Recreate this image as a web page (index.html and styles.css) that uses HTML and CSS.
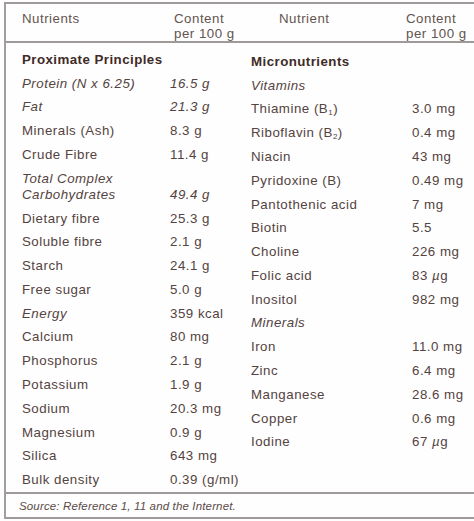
FILE: index.html
```html
<!DOCTYPE html>
<html>
<head>
<meta charset="utf-8">
<link rel="stylesheet" href="styles.css">
</head>
<body>
<div class="sheet">
  <div class="head">
    <div class="h h-name">Nutrients</div>
    <div class="h">Content<br>per 100 g</div>
    <div class="h">Nutrient</div>
    <div class="h">Content<br>per 100 g</div>
  </div>
  <div class="body">
    <div class="col col-left">
      <div class="row"><span class="group">Proximate Principles</span></div>
      <div class="row it"><span>Protein (N x 6.25)</span><span>16.5 g</span></div>
      <div class="row it"><span>Fat</span><span>21.3 g</span></div>
      <div class="row"><span>Minerals (Ash)</span><span>8.3 g</span></div>
      <div class="row"><span>Crude Fibre</span><span>11.4 g</span></div>
      <div class="row it"><span>Total Complex<br>Carbohydrates</span><span class="bottom">49.4 g</span></div>
      <div class="row"><span>Dietary fibre</span><span>25.3 g</span></div>
      <div class="row"><span>Soluble fibre</span><span>2.1 g</span></div>
      <div class="row"><span>Starch</span><span>24.1 g</span></div>
      <div class="row"><span>Free sugar</span><span>5.0 g</span></div>
      <div class="row"><span class="em">Energy</span><span>359 kcal</span></div>
      <div class="row"><span>Calcium</span><span>80 mg</span></div>
      <div class="row"><span>Phosphorus</span><span>2.1 g</span></div>
      <div class="row"><span>Potassium</span><span>1.9 g</span></div>
      <div class="row"><span>Sodium</span><span>20.3 mg</span></div>
      <div class="row"><span>Magnesium</span><span>0.9 g</span></div>
      <div class="row"><span>Silica</span><span>643 mg</span></div>
      <div class="row"><span>Bulk density</span><span>0.39 (g/ml)</span></div>
    </div>
    <div class="col col-right">
      <div class="row"><span class="group">Micronutrients</span></div>
      <div class="row"><span class="em">Vitamins</span></div>
      <div class="row"><span>Thiamine (B<sub>1</sub>)</span><span>3.0 mg</span></div>
      <div class="row"><span>Riboflavin (B<sub>2</sub>)</span><span>0.4 mg</span></div>
      <div class="row"><span>Niacin</span><span>43 mg</span></div>
      <div class="row"><span>Pyridoxine (B)</span><span>0.49 mg</span></div>
      <div class="row"><span>Pantothenic acid</span><span>7 mg</span></div>
      <div class="row"><span>Biotin</span><span>5.5</span></div>
      <div class="row"><span>Choline</span><span>226 mg</span></div>
      <div class="row"><span>Folic acid</span><span>83 <i>µ</i>g</span></div>
      <div class="row"><span>Inositol</span><span>982 mg</span></div>
      <div class="row"><span class="em">Minerals</span></div>
      <div class="row"><span>Iron</span><span>11.0 mg</span></div>
      <div class="row"><span>Zinc</span><span>6.4 mg</span></div>
      <div class="row"><span>Manganese</span><span>28.6 mg</span></div>
      <div class="row"><span>Copper</span><span>0.6 mg</span></div>
      <div class="row"><span>Iodine</span><span>67 <i>µ</i>g</span></div>
    </div>
  </div>
  <div class="foot">Source: Reference 1, 11 and the Internet.</div>
</div>
</body>
</html>
```

FILE: styles.css
```css
html, body {
  margin: 0;
  padding: 0;
  background: #fefefe;
}

body {
  font-family: "Liberation Sans", Arial, sans-serif;
  font-size: 13.3px;
  letter-spacing: 0.5px;
  color: #54433f;
}

.sheet {
  margin: 2px 0 0 4px;
  border-left: 2px solid #a29e9d;
  border-top: 2px solid #9e9a99;
}

.head {
  display: grid;
  grid-template-columns: 168px 105px 127px 1fr;
  height: 37px;
  box-sizing: border-box;
  padding-top: 7px;
  line-height: 15px;
  color: #64544f;
}

.h-name {
  padding-left: 16px;
}

.body {
  display: grid;
  grid-template-columns: 245px 1fr;
  border-top: 2px solid #9e9a99;
}

.col-left {
  padding-top: 5px;
}

.col-right {
  padding-top: 7px;
}

.row {
  display: grid;
  line-height: 16px;
  padding: 3.9px 0;
}

.col-left .row {
  grid-template-columns: 148px 1fr;
  padding-left: 16px;
}

.col-right .row {
  grid-template-columns: 161px 1fr;
}

.row.it,
.em {
  font-style: italic;
}

.bottom {
  align-self: end;
}

.group {
  font-weight: bold;
  color: #402b27;
  letter-spacing: 0.45px;
  grid-column: 1 / -1;
}

sub {
  font-size: 8px;
  line-height: 0;
  vertical-align: -2px;
}

.foot {
  border-top: 2px solid #9e9a99;
  border-bottom: 2px solid #9e9a99;
  height: 23px;
  line-height: 24px;
  padding-left: 13px;
  font-size: 11.5px;
  letter-spacing: 0.15px;
  font-style: italic;
  color: #5a4a47;
}
```
